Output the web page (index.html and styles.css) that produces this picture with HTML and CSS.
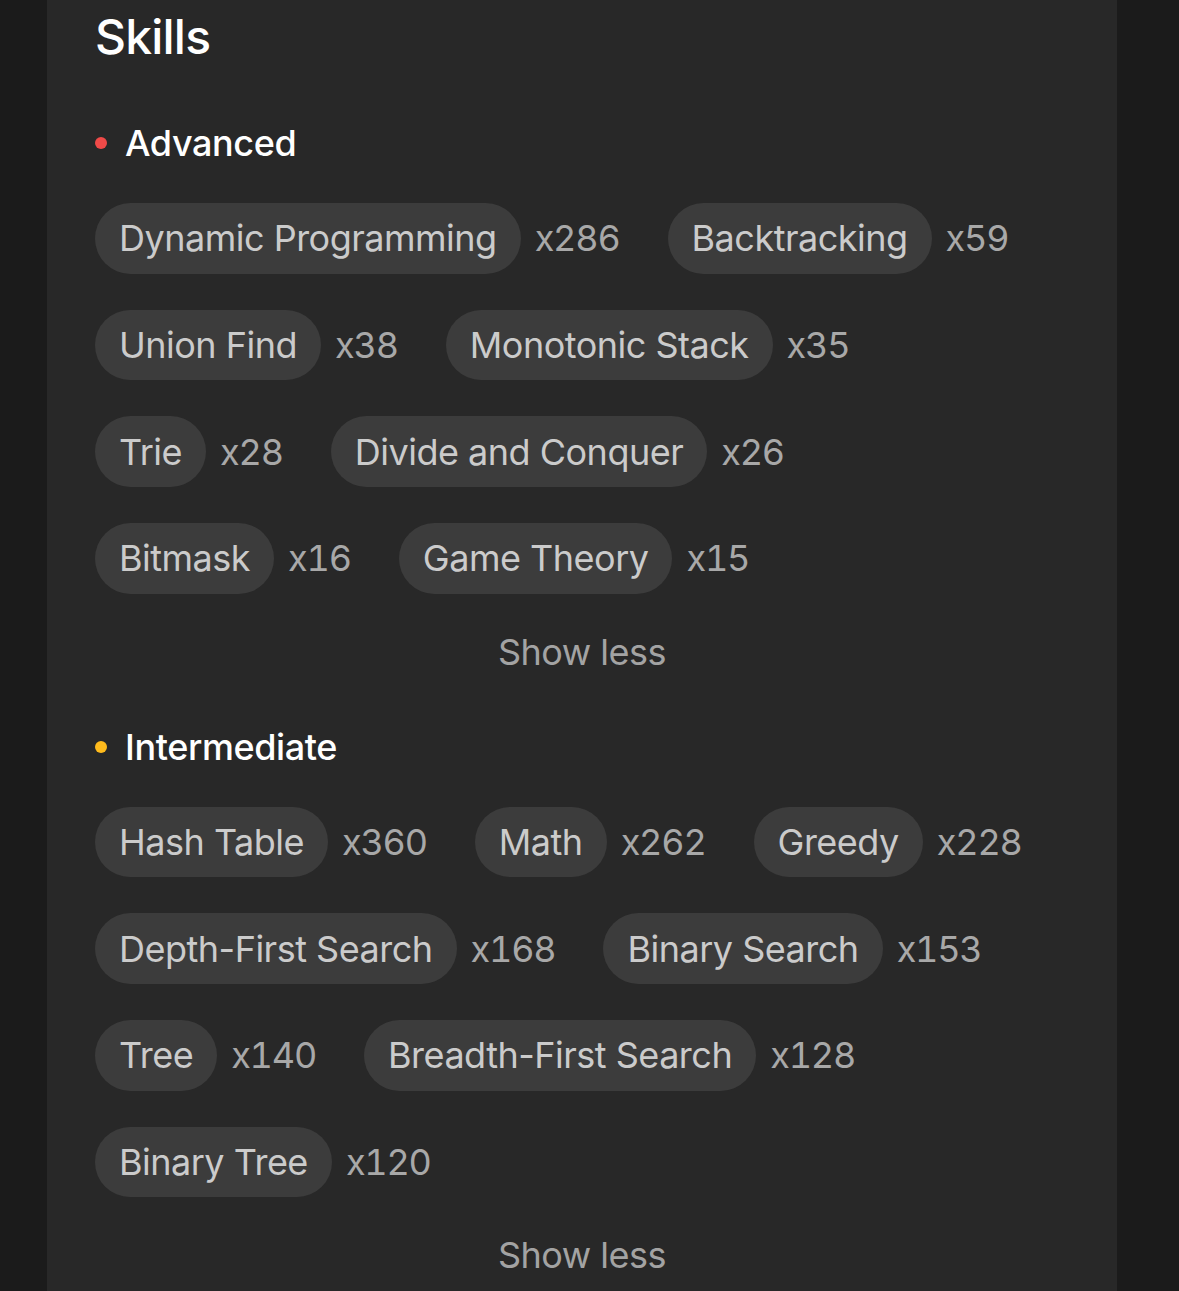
FILE: index.html
```html
<!DOCTYPE html>
<html lang="en">
<head>
<meta charset="utf-8">
<title>Skills</title>
<link rel="stylesheet" href="styles.css">
</head>
<body>
<main class="card">
  <h1 class="title">Skills</h1>

  <section class="group">
    <h2 class="group-head"><span class="dot dot-red"></span>Advanced</h2>
    <ul class="tags">
      <li class="tag"><span class="chip">Dynamic Programming</span><span class="count">x286</span></li>
      <li class="tag"><span class="chip">Backtracking</span><span class="count">x59</span></li>
      <li class="tag"><span class="chip">Union Find</span><span class="count">x38</span></li>
      <li class="tag"><span class="chip">Monotonic Stack</span><span class="count">x35</span></li>
      <li class="tag"><span class="chip">Trie</span><span class="count">x28</span></li>
      <li class="tag"><span class="chip">Divide and Conquer</span><span class="count">x26</span></li>
      <li class="tag"><span class="chip">Bitmask</span><span class="count">x16</span></li>
      <li class="tag"><span class="chip">Game Theory</span><span class="count">x15</span></li>
    </ul>
    <div class="more">Show less</div>
  </section>

  <section class="group">
    <h2 class="group-head"><span class="dot dot-yellow"></span>Intermediate</h2>
    <ul class="tags">
      <li class="tag"><span class="chip">Hash Table</span><span class="count">x360</span></li>
      <li class="tag"><span class="chip">Math</span><span class="count">x262</span></li>
      <li class="tag"><span class="chip">Greedy</span><span class="count">x228</span></li>
      <li class="tag"><span class="chip">Depth-First Search</span><span class="count">x168</span></li>
      <li class="tag"><span class="chip">Binary Search</span><span class="count">x153</span></li>
      <li class="tag"><span class="chip">Tree</span><span class="count">x140</span></li>
      <li class="tag"><span class="chip">Breadth-First Search</span><span class="count">x128</span></li>
      <li class="tag"><span class="chip">Binary Tree</span><span class="count">x120</span></li>
    </ul>
    <div class="more">Show less</div>
  </section>
</main>
</body>
</html>
```

FILE: styles.css
```css
html, body {
  margin: 0;
  padding: 0;
  background: #1b1b1b;
}

body {
  font-family: Inter, "Noto Sans", "Liberation Sans", sans-serif;
  height: 1291px;
  overflow: hidden;
}

.card {
  margin-left: 47px;
  width: 1070px;
  min-height: 1291px;
  background: #282828;
  box-sizing: border-box;
  padding: 8px 48px 0 48px;
}

.title {
  margin: 0;
  font-size: 48px;
  line-height: 58px;
  font-weight: 500;
  color: #ffffff;
  letter-spacing: -0.8px;
}

.group {
  margin-top: 55px;
}

.group + .group {
  margin-top: 51px;
}

.group-head {
  margin: 0;
  display: flex;
  align-items: center;
  gap: 18px;
  font-size: 36px;
  line-height: 44px;
  font-weight: 500;
  color: #ffffff;
  letter-spacing: -0.4px;
}

.dot {
  width: 12px;
  height: 12px;
  border-radius: 50%;
  flex: none;
}

.dot-red { background: #f04a48; }
.dot-yellow { background: #ffbb1c; }

.tags {
  list-style: none;
  margin: 38px 0 0 0;
  padding: 0;
  display: flex;
  flex-wrap: wrap;
  row-gap: 36px;
  column-gap: 48px;
}

.tag {
  display: flex;
  align-items: center;
  gap: 14px;
}

.chip {
  display: flex;
  align-items: center;
  height: 70.67px;
  padding: 0 24px;
  border-radius: 36px;
  background: #3c3c3c;
  color: #cbcbcb;
  font-size: 36px;
  letter-spacing: -0.5px;
}

.count {
  color: #a8a8a8;
  font-size: 36px;
  letter-spacing: -1.2px;
  font-variant-numeric: tabular-nums;
}

.more {
  margin-top: 36px;
  text-align: center;
  font-size: 36px;
  line-height: 44px;
  color: #a3a3a3;
  letter-spacing: -0.5px;
}
```
